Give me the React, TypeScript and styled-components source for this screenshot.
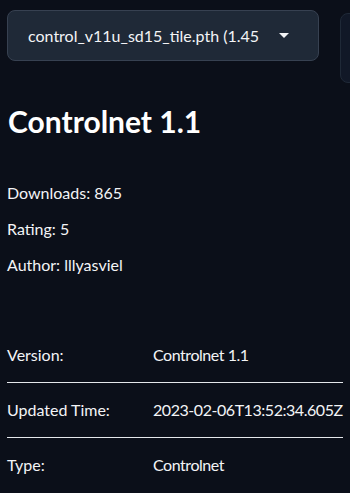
import React from "react";
import styled, { createGlobalStyle } from "styled-components";

const Global = createGlobalStyle`
  html, body {
    margin: 0;
    padding: 0;
    background: #0b0f19;
  }
  body {
    font-family: Lato, "Liberation Sans", sans-serif;
    color: #f3f4f6;
    overflow: hidden;
  }
`;

const Page = styled.div`
  width: 350px;
  height: 493px;
  background: #0b0f19;
  padding: 10px 7px 0 7px;
  box-sizing: border-box;
  overflow: hidden;
`;

const TopRow = styled.div`
  display: flex;
  gap: 21px;
  width: 420px;
`;

const Select = styled.div`
  width: 312px;
  height: 51px;
  flex: none;
  box-sizing: border-box;
  background: #1f2937;
  border: 1px solid #374151;
  border-radius: 8px;
  display: flex;
  align-items: center;
  padding: 0 0 0 20px;
  font-size: 16px;
  color: #f3f4f6;
  white-space: nowrap;
  overflow: hidden;
`;

const SelectText = styled.span`
  overflow: hidden;
  width: 242px;
  flex: none;
`;

const Caret = styled.svg`
  margin-left: 9px;
  flex: none;
`;

const SidePanel = styled.div`
  width: 80px;
  height: 68px;
  margin-top: 3px;
  background: #111827;
  border: 1px solid #1f2937;
  border-radius: 8px;
  flex: none;
`;

const Title = styled.h1`
  margin: 20px 0 0 1px;
  font-size: 30px;
  font-weight: 700;
  line-height: 36px;
  color: #ffffff;
`;

const Meta = styled.div`
  margin-top: 43px;
  display: flex;
  flex-direction: column;
  gap: 14px;
`;

const MetaLine = styled.p`
  margin: 0;
  font-size: 16px;
  line-height: 22px;
`;

const Table = styled.div`
  margin-top: 52px;
  width: 336px;
`;

const Row = styled.div<{ $last?: boolean }>`
  display: grid;
  grid-template-columns: 146px 1fr;
  height: 55px;
  padding-bottom: 2px;
  align-items: center;
  box-sizing: border-box;
  border-bottom: ${(p) => (p.$last ? "none" : "1px solid #e5e7eb")};
  font-size: 16px;
  white-space: nowrap;
`;

const Value = styled.span`
  letter-spacing: -0.45px;
`;

const rows = [
  ["Version:", "Controlnet 1.1"],
  ["Updated Time:", "2023-02-06T13:52:34.605Z"],
  ["Type:", "Controlnet"],
];

export default function App() {
  return (
    <Page>
      <Global />
      <TopRow>
        <Select>
          <SelectText>control_v11u_sd15_tile.pth (1.45</SelectText>
          <Caret width="10" height="6" viewBox="0 0 10 6">
            <path d="M0 0 L10 0 L5 5 Z" fill="#f3f4f6" />
          </Caret>
        </Select>
        <SidePanel />
      </TopRow>
      <Title>Controlnet 1.1</Title>
      <Meta>
        <MetaLine>Downloads: 865</MetaLine>
        <MetaLine>Rating: 5</MetaLine>
        <MetaLine>Author: lllyasviel</MetaLine>
      </Meta>
      <Table>
        {rows.map(([k, v], i) => (
          <Row key={k} $last={i === rows.length - 1}>
            <span>{k}</span>
            <Value>{v}</Value>
          </Row>
        ))}
      </Table>
    </Page>
  );
}
